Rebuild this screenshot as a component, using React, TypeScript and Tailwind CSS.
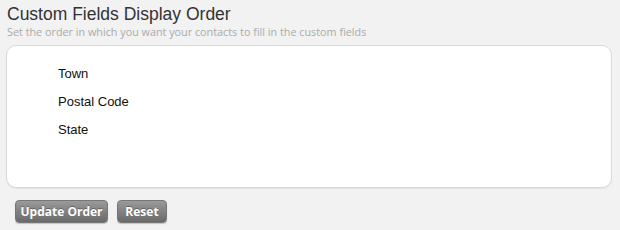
import React from 'react';

const FIELDS = ['Town', 'Postal Code', 'State'];

const App: React.FC = () => {
  return (
    <div className="w-[620px] h-[230px] bg-[#f2f2f2] font-['Liberation_Sans',Arial,sans-serif] overflow-hidden">
      <div className="px-[7px] pt-[3px]">
        <h2 className="text-[17.5px] leading-[22px] text-[#333]">Custom Fields Display Order</h2>
        <p className="mt-[0px] text-[10.8px] leading-[13px] text-[#aaa] font-['Open_Sans',sans-serif]">
          Set the order in which you want your contacts to fill in the custom fields
        </p>
      </div>

      <div className="mx-[6px] mt-[7px] w-[606px] h-[143px] bg-white border border-[#d9d9d9] rounded-[10px] shadow-[0_1px_1px_rgba(0,0,0,0.06)]">
        <ul className="pl-[51px] pt-[20px] flex flex-col gap-[12px]">
          {FIELDS.map((field) => (
            <li key={field} className="text-[13px] leading-[16px] text-[#111]">
              {field}
            </li>
          ))}
        </ul>
      </div>

      <div className="flex gap-[9px] pl-[15px] mt-[12px]">
        <button className="h-[23px] w-[93px] rounded-[4px] bg-gradient-to-b from-[#9a9a9a] to-[#6a6a6a] border border-[#777] text-white text-[12px] font-bold font-['Open_Sans',sans-serif] shadow-[0_1px_1px_rgba(0,0,0,0.2)] [text-shadow:0_-1px_0_rgba(0,0,0,0.3)]">
          Update Order
        </button>
        <button className="h-[23px] w-[50px] rounded-[4px] bg-gradient-to-b from-[#9a9a9a] to-[#6a6a6a] border border-[#777] text-white text-[12px] font-bold font-['Open_Sans',sans-serif] shadow-[0_1px_1px_rgba(0,0,0,0.2)] [text-shadow:0_-1px_0_rgba(0,0,0,0.3)]">
          Reset
        </button>
      </div>
    </div>
  );
};

export default App;
